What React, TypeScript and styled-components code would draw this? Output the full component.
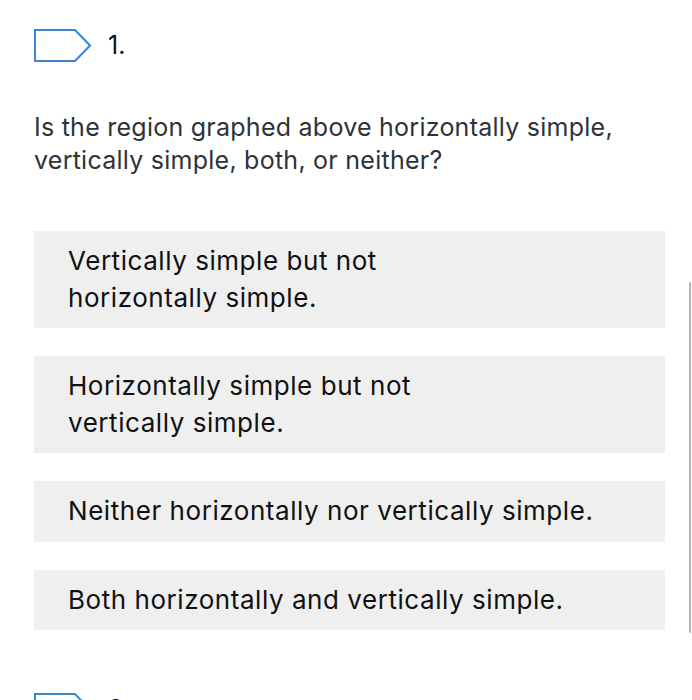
import React from "react";
import styled, { createGlobalStyle } from "styled-components";

const Global = createGlobalStyle`
  html, body { margin: 0; padding: 0; background: #ffffff; }
  body { font-family: Inter, "Noto Sans", sans-serif; overflow: hidden; }
`;

const Page = styled.div`
  position: relative;
  width: 692px;
  height: 700px;
  overflow: hidden;
  background: #fff;
`;

const List = styled.div`
  display: flex;
  flex-direction: column;
  padding: 30px 27px 0 34px;
`;

const Question = styled.section`
  display: flex;
  flex-direction: column;
  padding-bottom: 64px;
`;

const Header = styled.div`
  display: flex;
  align-items: center;
  gap: 17px;
  height: 31px;
`;

const Number = styled.span`
  font-size: 25px;
  color: #111;
  line-height: 31px;
`;

const Prompt = styled.p`
  margin: 50px 0 54px;
  font-size: 25px;
  line-height: 33px;
  color: #2e3337;
  letter-spacing: 0.25px;
`;

const Options = styled.div`
  display: flex;
  flex-direction: column;
  gap: 28px;
`;

const Option = styled.div`
  background: #efefef;
  padding: 12px 34px;
  font-size: 26px;
  line-height: 36.5px;
  color: #111;
  letter-spacing: 0.55px;
`;

const ScrollBar = styled.div`
  position: absolute;
  left: 689px;
  top: 282px;
  width: 2px;
  height: 351px;
  background: #b3b3b3;
  border-radius: 1px;
`;

const Tag = () => (
  <svg width="57" height="33" viewBox="0 0 57 33">
    <path d="M1 1 H41 L56 16.5 L41 32 H1 Z" fill="none" stroke="#3b86d3" strokeWidth="2" />
  </svg>
);

const options: React.ReactNode[] = [
  <>Vertically simple but not<br />horizontally simple.</>,
  <>Horizontally simple but not<br />vertically simple.</>,
  <>Neither horizontally nor vertically simple.</>,
  <>Both horizontally and vertically simple.</>,
];

export default function App() {
  return (
    <Page>
      <Global />
      <List>
        <Question>
          <Header>
            <Tag />
            <Number>1.</Number>
          </Header>
          <Prompt>
            Is the region graphed above horizontally simple,
            <br />
            vertically simple, both, or neither?
          </Prompt>
          <Options>
            {options.map((o, i) => (
              <Option key={i}>{o}</Option>
            ))}
          </Options>
        </Question>
        <Question>
          <Header>
            <Tag />
            <Number>2.</Number>
          </Header>
        </Question>
      </List>
      <ScrollBar />
    </Page>
  );
}
